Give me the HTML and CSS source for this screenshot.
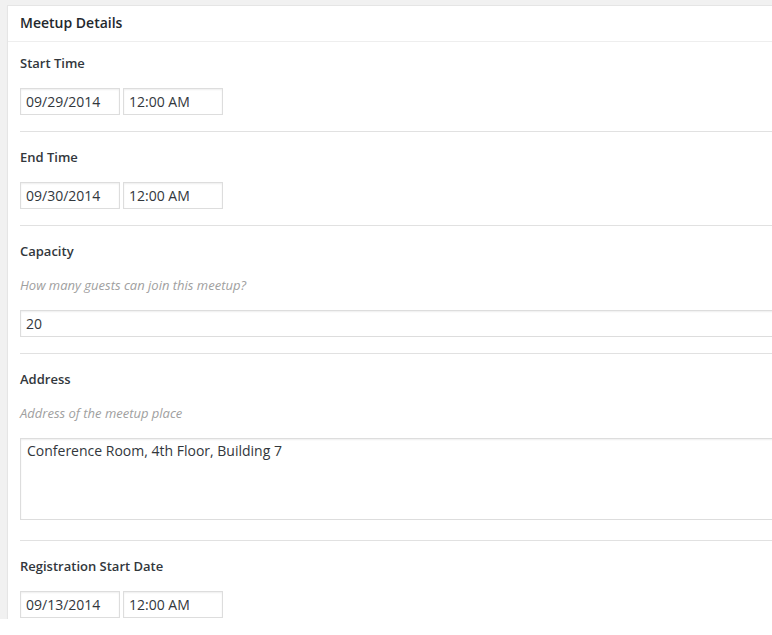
FILE: index.html
```html
<!DOCTYPE html>
<html lang="en">
<head>
<meta charset="utf-8">
<title>Meetup Details</title>
<link rel="stylesheet" href="styles.css">
</head>
<body>
<div class="wrap">
  <div class="postbox">
    <h2 class="hndle">Meetup Details</h2>
    <div class="inside">
      <div class="field first">
        <p class="label">Start Time</p>
        <div class="datetime">
          <input class="short" type="text" value="09/29/2014">
          <input class="short" type="text" value="12:00 AM">
        </div>
      </div>
      <div class="field">
        <p class="label">End Time</p>
        <div class="datetime">
          <input class="short" type="text" value="09/30/2014">
          <input class="short" type="text" value="12:00 AM">
        </div>
      </div>
      <div class="field">
        <p class="label">Capacity</p>
        <p class="desc">How many guests can join this meetup?</p>
        <input class="full" type="text" value="20">
      </div>
      <div class="field">
        <p class="label">Address</p>
        <p class="desc">Address of the meetup place</p>
        <textarea class="area">Conference Room, 4th Floor, Building 7</textarea>
      </div>
      <div class="field">
        <p class="label">Registration Start Date</p>
        <div class="datetime">
          <input class="short" type="text" value="09/13/2014">
          <input class="short" type="text" value="12:00 AM">
        </div>
      </div>
    </div>
  </div>
</div>
</body>
</html>
```

FILE: styles.css
```css
html, body {
  margin: 0;
  padding: 0;
  background: #fff;
  overflow: hidden;
}

body {
  font-family: "Open Sans", "Liberation Sans", sans-serif;
  font-size: 13px;
  color: #444;
}

.wrap {
  background: #f1f1f1;
  height: 614px;
  padding: 5px 0 0 7px;
  overflow: hidden;
}

.postbox {
  width: 820px;
  background: #fff;
  border: 1px solid #e5e5e5;
  box-shadow: 0 1px 1px rgba(0, 0, 0, 0.04);
}

.hndle {
  margin: 0;
  padding: 7px 12px 8px;
  font-size: 14px;
  line-height: 20px;
  font-weight: 600;
  color: #23282d;
  border-bottom: 1px solid #eee;
}

.inside {
  padding: 0 0 0 12px;
}

.field {
  padding: 16px 0;
  border-top: 1px solid #e1e1e1;
}

.field.first {
  border-top: none;
  padding-top: 12px;
}

.label {
  margin: 0 0 16px;
  font-size: 13px;
  line-height: 18px;
  font-weight: 600;
  color: #32373c;
}

.desc {
  margin: 0 0 16px;
  font-size: 13px;
  line-height: 18px;
  font-style: italic;
  color: #a0a0a0;
}

.datetime {
  display: flex;
  gap: 3px;
}

input, textarea {
  font-family: "Open Sans", "Liberation Sans", sans-serif;
  font-size: 14px;
  color: #32373c;
  border: 1px solid #ddd;
  box-shadow: inset 0 1px 2px rgba(0, 0, 0, 0.07);
  background: #fff;
  box-sizing: border-box;
  margin: 0;
  outline: none;
}

input {
  display: block;
  height: 27px;
  padding: 0 5px;
  line-height: 25px;
}

.short {
  width: 100px;
}

.full {
  width: 800px;
}

.area {
  display: block;
  width: 800px;
  height: 82px;
  padding: 2px 6px;
  line-height: 20px;
  resize: none;
  margin-bottom: 4px;
}
```
